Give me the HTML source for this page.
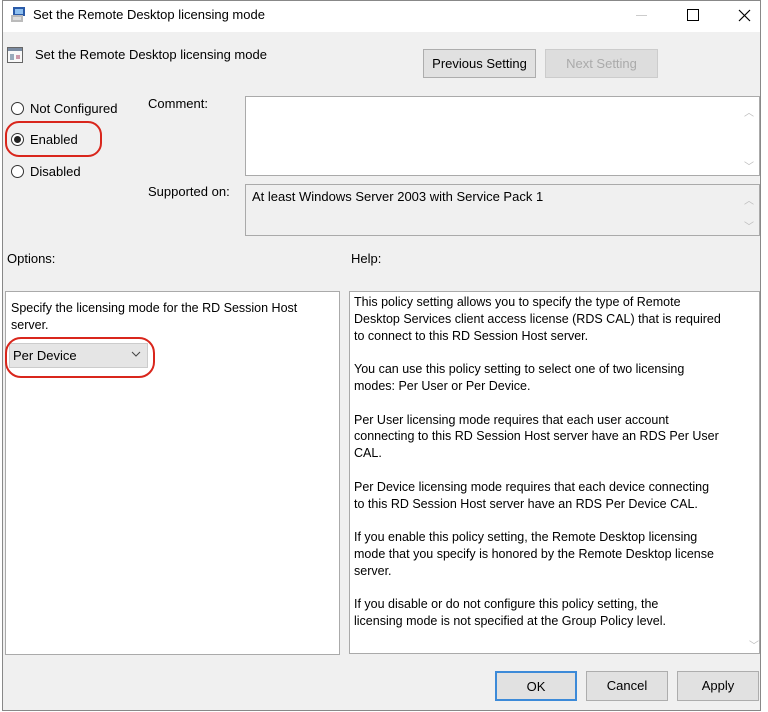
<!DOCTYPE html>
<html><head><style>
*{box-sizing:border-box;margin:0;padding:0}
body{width:768px;height:712px;background:#fff;font-family:"Liberation Sans",sans-serif;font-size:12px;color:#000;position:relative;overflow:hidden}
.a{position:absolute}
.win{left:2px;top:0;width:759px;height:711px;border:1px solid #888;background:#f0f0f0}
.tb{left:3px;top:1px;width:757px;height:31px;background:#fff}
.box{border:1px solid #aaa;background:#fff}
.btn{border:1px solid #adadad;background:#e1e1e1;text-align:center;font-size:13px}
.rad{width:13px;height:13px;border:1px solid #333;border-radius:50%;background:#fff}
.red{border:2px solid #d9261c;border-radius:14px}
.help{font-size:12.5px;white-space:nowrap}
.help p{margin-bottom:16.8px;line-height:16.8px}
.sb{color:#bbb;font-size:10px}
</style></head><body>
<div class="a win"></div>
<div class="a tb"></div>
<svg class="a" style="left:10px;top:6px" width="18" height="18" viewBox="0 0 18 18"><rect x="3" y="1" width="12" height="9" fill="#2a5aa8"/><rect x="5" y="3" width="8" height="5" fill="#8fc0f0"/><rect x="1" y="9" width="12" height="7" fill="#bbb"/><rect x="3" y="11" width="8" height="3" fill="#ddd"/></svg>
<div class="a" style="left:33px;top:7px;font-size:13px">Set the Remote Desktop licensing mode</div>
<div class="a" style="left:636px;top:15px;width:11px;height:1px;background:#ccc"></div>
<div class="a" style="left:687px;top:9px;width:12px;height:12px;border:1px solid #000"></div>
<svg class="a" style="left:738px;top:9px" width="13" height="13"><path d="M1 1L12 12M12 1L1 12" stroke="#000" stroke-width="1.2"/></svg>
<svg class="a" style="left:7px;top:47px" width="16" height="17" viewBox="0 0 16 17"><rect x=".5" y=".5" width="15" height="15" fill="#f8f8f8" stroke="#666"/><rect x="1" y="1" width="14" height="3" fill="#7a8aa0"/><rect x="3" y="7" width="4" height="6" fill="#9ab"/><rect x="9" y="8" width="4" height="4" fill="#c9a"/></svg>
<div class="a" style="left:35px;top:47px;font-size:13px">Set the Remote Desktop licensing mode</div>
<div class="a btn" style="left:423px;top:49px;width:113px;height:29px;line-height:27px">Previous Setting</div>
<div class="a btn" style="left:545px;top:49px;width:113px;height:29px;line-height:27px;color:#aaa;background:#ddd;border-color:#ccc">Next Setting</div>

<div class="a rad" style="left:11px;top:102px"></div><div class="a" style="left:30px;top:101px;font-size:13px">Not Configured</div>
<div class="a rad" style="left:11px;top:133px"></div><div class="a" style="left:14px;top:136px;width:7px;height:7px;border-radius:50%;background:#222"></div><div class="a" style="left:30px;top:132px;font-size:13px">Enabled</div>
<div class="a rad" style="left:11px;top:165px"></div><div class="a" style="left:30px;top:164px;font-size:13px">Disabled</div>
<div class="a red" style="left:5px;top:121px;width:97px;height:36px"></div>

<div class="a" style="left:148px;top:96px;font-size:13px">Comment:</div>
<div class="a box" style="left:245px;top:96px;width:515px;height:80px"></div>
<div class="a sb" style="left:744px;top:104px">︿</div><div class="a sb" style="left:744px;top:158px">﹀</div>
<div class="a" style="left:148px;top:184px;font-size:13px">Supported on:</div>
<div class="a box" style="left:245px;top:184px;width:515px;height:52px;background:#f0f0f0"></div>
<div class="a" style="left:252px;top:189px;font-size:13px">At least Windows Server 2003 with Service Pack 1</div>
<div class="a sb" style="left:744px;top:192px">︿</div><div class="a sb" style="left:744px;top:218px">﹀</div>

<div class="a" style="left:7px;top:251px;font-size:13px">Options:</div>
<div class="a" style="left:351px;top:251px;font-size:13px">Help:</div>
<div class="a box" style="left:5px;top:291px;width:335px;height:364px"></div>
<div class="a" style="left:11px;top:300px;line-height:17px;font-size:12.5px;white-space:nowrap">Specify the licensing mode for the RD Session Host<br>server.</div>
<div class="a" style="left:9px;top:343px;width:139px;height:25px;background:#e5e5e5;border:1px solid #ccc"></div>
<div class="a" style="left:13px;top:348px;font-size:13px">Per Device</div>
<svg class="a" style="left:131px;top:351px" width="10" height="7"><path d="M1 1l4 4 4-4" stroke="#444" fill="none"/></svg>
<div class="a red" style="left:5px;top:337px;width:150px;height:41px;border-radius:16px"></div>

<div class="a box" style="left:349px;top:291px;width:411px;height:363px"></div>
<div class="a help" style="left:354px;top:294px;width:392px">
<p>This policy setting allows you to specify the type of Remote<br>Desktop Services client access license (RDS CAL) that is required<br>to connect to this RD Session Host server.</p>
<p>You can use this policy setting to select one of two licensing<br>modes: Per User or Per Device.</p>
<p>Per User licensing mode requires that each user account<br>connecting to this RD Session Host server have an RDS Per User<br>CAL.</p>
<p>Per Device licensing mode requires that each device connecting<br>to this RD Session Host server have an RDS Per Device CAL.</p>
<p>If you enable this policy setting, the Remote Desktop licensing<br>mode that you specify is honored by the Remote Desktop license<br>server.</p>
<p>If you disable or do not configure this policy setting, the<br>licensing mode is not specified at the Group Policy level.</p>
</div>
<div class="a sb" style="left:749px;top:637px">﹀</div>

<div class="a btn" style="left:495px;top:671px;width:82px;height:30px;line-height:28px;border:2px solid #3c8ad8">OK</div>
<div class="a btn" style="left:586px;top:671px;width:82px;height:30px;line-height:28px">Cancel</div>
<div class="a btn" style="left:677px;top:671px;width:82px;height:30px;line-height:28px">Apply</div>
</body></html>
